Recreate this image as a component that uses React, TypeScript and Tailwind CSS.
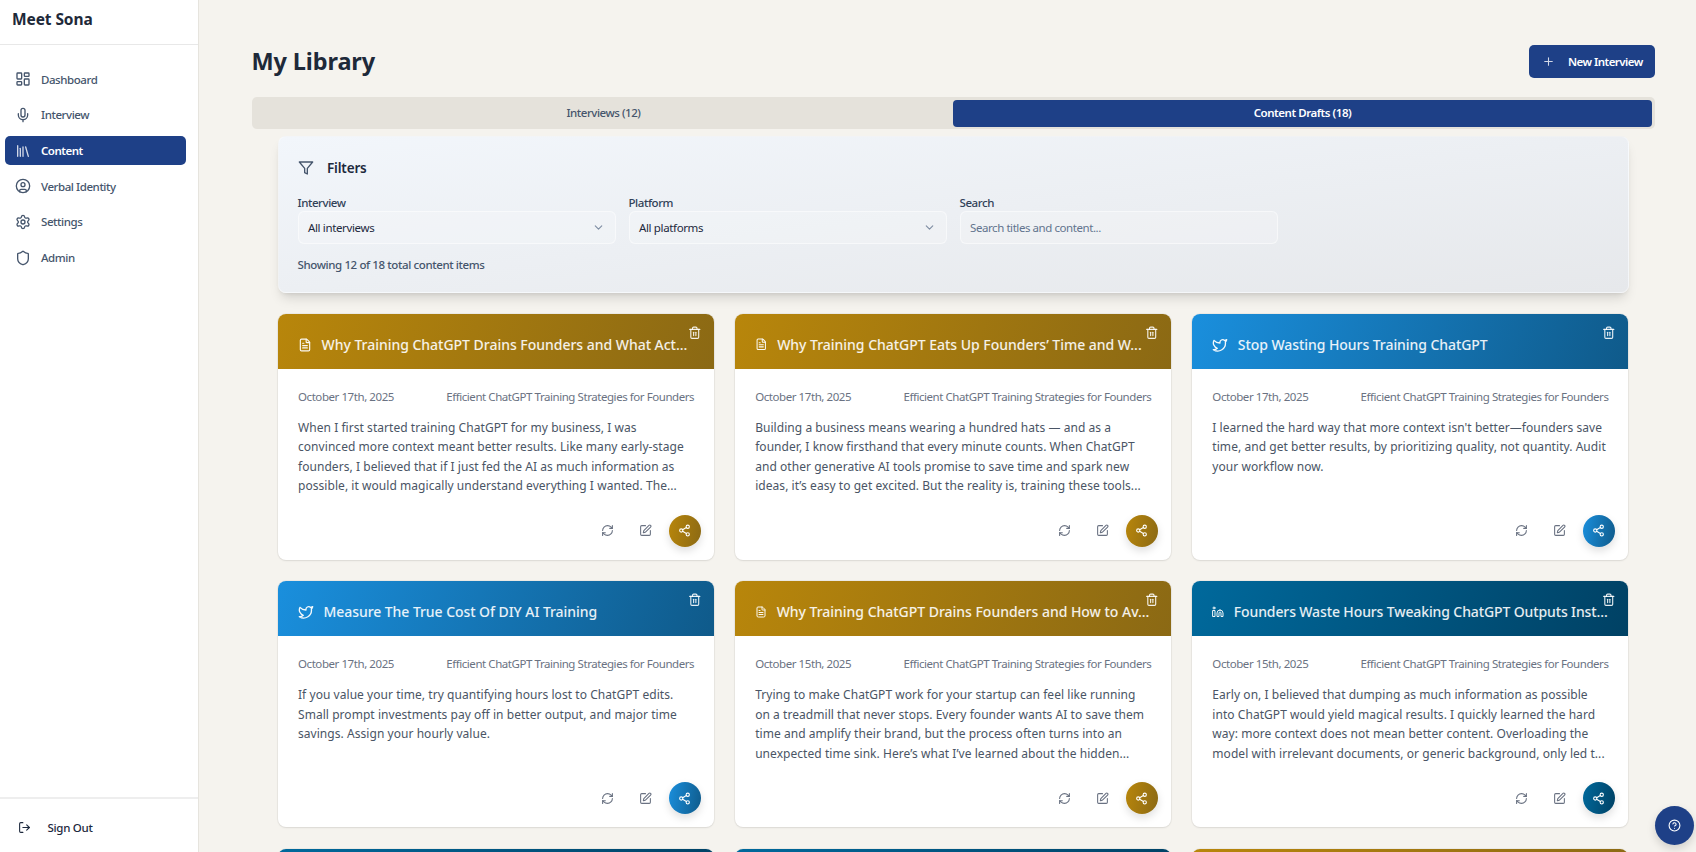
import {
  ChevronDown,
  CircleHelp,
  CircleUser,
  FileText,
  LayoutDashboard,
  Library,
  Linkedin,
  LogOut,
  Mic,
  Plus,
  RefreshCw,
  Settings,
  Share2,
  Shield,
  SquarePen,
  Trash2,
  Twitter,
} from "lucide-react"
import clsx from "clsx"

type Platform = "article" | "twitter" | "linkedin"

type Draft = {
  platform: Platform
  title?: string
  iconSize: number
  date?: string
  body?: string
}

const navItems = [
  { label: "Dashboard", icon: LayoutDashboard },
  { label: "Interview", icon: Mic },
  { label: "Content", icon: Library, active: true },
  { label: "Verbal Identity", icon: CircleUser },
  { label: "Settings", icon: Settings },
  { label: "Admin", icon: Shield },
]

const drafts: Draft[] = [
  {
    platform: "article",
    title: "Why Training ChatGPT Drains Founders and What Act...",
    iconSize: 14,
    date: "October 17th, 2025",
    body: "When I first started training ChatGPT for my business, I was convinced more context meant better results. Like many early-stage founders, I believed that if I just fed the AI as much information as possible, it would magically understand everything I wanted. The...",
  },
  {
    platform: "article",
    title: "Why Training ChatGPT Eats Up Founders’ Time and W...",
    iconSize: 12.5,
    date: "October 17th, 2025",
    body: "Building a business means wearing a hundred hats — and as a founder, I know firsthand that every minute counts. When ChatGPT and other generative AI tools promise to save time and spark new ideas, it’s easy to get excited. But the reality is, training these tools...",
  },
  {
    platform: "twitter",
    title: "Stop Wasting Hours Training ChatGPT",
    iconSize: 16,
    date: "October 17th, 2025",
    body: "I learned the hard way that more context isn't better—founders save time, and get better results, by prioritizing quality, not quantity. Audit your workflow now.",
  },
  {
    platform: "twitter",
    title: "Measure The True Cost Of DIY AI Training",
    iconSize: 16,
    date: "October 17th, 2025",
    body: "If you value your time, try quantifying hours lost to ChatGPT edits. Small prompt investments pay off in better output, and major time savings. Assign your hourly value.",
  },
  {
    platform: "article",
    title: "Why Training ChatGPT Drains Founders and How to Av...",
    iconSize: 12,
    date: "October 15th, 2025",
    body: "Trying to make ChatGPT work for your startup can feel like running on a treadmill that never stops. Every founder wants AI to save them time and amplify their brand, but the process often turns into an unexpected time sink. Here’s what I’ve learned about the hidden...",
  },
  {
    platform: "linkedin",
    title: "Founders Waste Hours Tweaking ChatGPT Outputs Inst...",
    iconSize: 12,
    date: "October 15th, 2025",
    body: "Early on, I believed that dumping as much information as possible into ChatGPT would yield magical results. I quickly learned the hard way: more context does not mean better content. Overloading the model with irrelevant documents, or generic background, only led t...",
  },
  { platform: "linkedin", iconSize: 12 },
  { platform: "linkedin", iconSize: 12 },
  { platform: "article", iconSize: 12 },
]

const platformStyles = {
  article: {
    icon: FileText,
    header: "bg-[linear-gradient(110deg,#b8860b,#8b6914)]",
    button: "bg-[linear-gradient(100deg,#b8860b,#8b6914)]",
    title: "tracking-[-0.02px]",
  },
  twitter: {
    icon: Twitter,
    header: "bg-[linear-gradient(110deg,#1a8fdd,#0f5a8a)]",
    button: "bg-[linear-gradient(100deg,#1a8fdd,#0f5a8a)]",
    title: "tracking-[-0.06px]",
  },
  linkedin: {
    icon: Linkedin,
    header: "bg-[linear-gradient(110deg,#00699c,#004164)]",
    button: "bg-[linear-gradient(100deg,#00699c,#004164)]",
    title: "tracking-[-0.12px]",
  },
}

const FunnelIcon = () => (
  <svg
    className="size-4 text-slate-600"
    viewBox="0 0 24 24"
    fill="none"
    stroke="currentColor"
    strokeWidth="2"
    strokeLinecap="round"
    strokeLinejoin="round"
  >
    <polygon points="22 3 2 3 10 12.46 10 19 14 21 14 12.46 22 3" />
  </svg>
)

const Sidebar = () => (
  <aside className="flex w-[199px] shrink-0 flex-col border-r border-[#e6e4de] bg-white">
    <div className="h-[45px] border-b border-[#e8e8e8] pl-3 pt-[7px] text-[15.5px] font-bold leading-6 tracking-[-0.1px] text-gray-800">
      Meet Sona
    </div>
    <nav className="flex flex-1 flex-col gap-[6.2px] pl-[5px] pr-3 pt-[19.5px]">
      {navItems.map(({ label, icon: Icon, active }) => (
        <a
          key={label}
          className={clsx(
            "flex h-[29.5px] items-center gap-[10px] rounded-[5px] pl-[10px] text-[11.5px]",
            active
              ? "bg-[#1e4087] font-semibold tracking-[-0.5px] text-white"
              : "font-medium tracking-[-0.43px] text-slate-600"
          )}
        >
          <Icon className={clsx("size-4", active && "opacity-80")} strokeWidth={2} />
          {label}
        </a>
      ))}
    </nav>
    <div className="flex h-[55px] items-center gap-[16.5px] border-t-2 border-[#eeeeee] pl-[18px] pt-1 text-[11.5px] font-medium tracking-[-0.3px] text-slate-800">
      <LogOut className="size-[13px]" />
      <span className="pt-px">Sign Out</span>
    </div>
  </aside>
)

const Label = ({ text }: { text: string }) => (
  <div className="h-4 text-[11.5px] font-medium leading-4 tracking-[-0.43px] text-slate-700">{text}</div>
)

const Select = ({ label, value }: { label: string; value: string }) => (
  <div className="w-[318px]">
    <Label text={label} />
    <div className="flex h-[32.5px] items-center justify-between rounded-md border border-white/50 bg-white/20 px-[9.5px] text-[11.5px] tracking-[-0.36px] text-slate-800">
      {value}
      <ChevronDown className="size-[13px] text-slate-500 opacity-80" />
    </div>
  </div>
)

const Filters = () => (
  <section className="mt-[7px] h-[157px] rounded-lg border border-white/40 bg-linear-to-br from-[#f2f6fb] to-[#e6e8eb] pl-[18.5px] pt-[21px] shadow-[0_8px_12px_-3px_rgba(0,0,0,0.13),0_3px_5px_-3px_rgba(0,0,0,0.12)]">
    <div className="flex h-5 items-center gap-[13.5px]">
      <FunnelIcon />
      <h2 className="text-[13.5px] font-semibold tracking-[-0.18px] text-slate-800">Filters</h2>
    </div>
    <div className="mt-[17px] flex gap-[13px]">
      <Select label="Interview" value="All interviews" />
      <Select label="Platform" value="All platforms" />
      <div className="w-[318px]">
        <Label text="Search" />
        <input
          className="block h-[32.5px] w-full rounded-md border border-white/50 bg-white/20 px-[9.5px] pt-px text-[11.5px] tracking-[-0.43px] placeholder:text-slate-500"
          placeholder="Search titles and content..."
        />
      </div>
    </div>
    <p className="mt-[13.4px] text-[11.5px] font-medium leading-4 tracking-[-0.39px] text-slate-600">
      Showing 12 of 18 total content items
    </p>
  </section>
)

const DraftCard = ({ draft }: { draft: Draft }) => {
  const { icon: Icon, header, button, title } = platformStyles[draft.platform]

  return (
    <article className="relative h-[246px] overflow-hidden rounded-lg bg-white shadow-[0_1px_2px_rgba(0,0,0,0.08),0_0_0_1px_rgba(0,0,0,0.035)]">
      <div className={clsx("flex h-[55px] items-center pl-5 pt-[7px] text-white", header)}>
        <Icon className="shrink-0 opacity-95" size={draft.iconSize} strokeWidth={2} />
        <h3 className={clsx("ml-[9.5px] whitespace-nowrap text-[14px] font-medium leading-5 text-white/90", title)}>
          {draft.title}
        </h3>
      </div>
      <Trash2 className="absolute right-[13px] top-[12px] size-[13.5px] text-white/90" />
      <div className="px-5 pt-5">
        {draft.date && (
          <div className="flex justify-between text-[11.5px] leading-4 text-gray-500">
            <span className="tracking-[-0.43px]">{draft.date}</span>
            <span className="tracking-[-0.44px]">Efficient ChatGPT Training Strategies for Founders</span>
          </div>
        )}
        <p className="mt-[13px] h-[78px] text-[12px] leading-[19.5px] tracking-[0.05px] text-gray-600">
          {draft.body}
        </p>
      </div>
      <div className="mt-[19px] flex items-center justify-end gap-[25.5px] pr-[13.5px] text-gray-500">
        <RefreshCw className="size-[13px]" />
        <SquarePen className="size-[13px]" />
        <button
          className={clsx(
            "-ml-[9px] flex size-8 items-center justify-center rounded-full text-white shadow-[0_4px_8px_rgba(0,0,0,0.13)]",
            button
          )}
        >
          <Share2 className="size-[13px]" />
        </button>
      </div>
    </article>
  )
}

const App = () => (
  <div className="flex h-screen overflow-hidden bg-[#f5f3ee] font-['Noto_Sans',sans-serif]">
    <Sidebar />
    <main className="min-w-0 flex-1 pl-[52.5px] pr-[41.5px] pt-[45px]">
      <div className="flex h-[32.5px] items-center justify-between">
        <h1 className="pt-px text-[23.5px] font-bold tracking-[-0.12px] text-gray-800">My Library</h1>
        <button className="flex h-[32.5px] w-[126px] items-center gap-[13px] rounded-[5px] bg-[#1e4087] pl-[13.5px] text-[11.5px] font-semibold tracking-[-0.54px] text-white">
          <Plus className="size-[13px] opacity-80" />
          New Interview
        </button>
      </div>

      <div className="mt-[19.5px] flex h-8 rounded-[5px] bg-[#e5e2db] p-[2.5px] text-[11.5px] tracking-[-0.46px]">
        <div className="flex flex-1 items-center justify-center font-medium text-slate-600">
          Interviews (12)
        </div>
        <div className="flex flex-1 items-center justify-center rounded-[4px] bg-[#1e4087] font-semibold text-white">
          Content Drafts (18)
        </div>
      </div>

      <div className="pl-[26.5px] pr-[26px]">
        <Filters />
        <div className="mt-[20.7px] grid grid-cols-3 gap-x-[21px] gap-y-[21.8px]">
          {drafts.map((draft, i) => (
            <DraftCard key={i} draft={draft} />
          ))}
        </div>
      </div>
    </main>

    {/* Help button */}
    <button className="fixed bottom-[7.5px] right-[2px] flex size-[39px] items-center justify-center rounded-full bg-[#1e4087] text-white shadow-[0_4px_8px_rgba(0,0,0,0.15)]">
      <CircleHelp className="size-[13px]" />
    </button>
  </div>
)

export default App
